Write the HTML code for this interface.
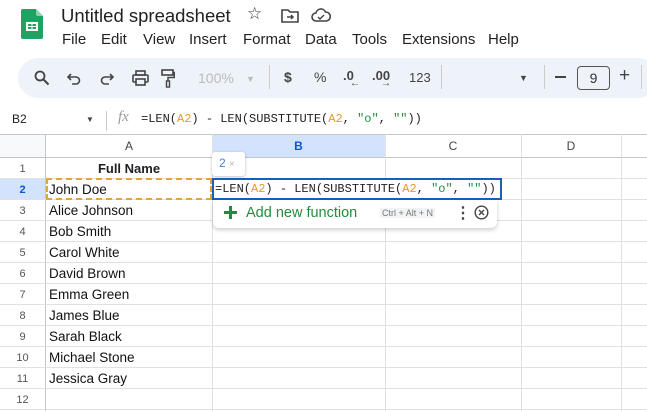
<!DOCTYPE html>
<html><head><style>
*{margin:0;padding:0;box-sizing:border-box}
body{width:647px;height:411px;overflow:hidden;background:#fff;font-family:"Liberation Sans",Arial,sans-serif;position:relative;color:#202124}
.a{position:absolute}
.m{position:absolute;top:31px;font-size:15px;color:#222;white-space:nowrap}
.tb{color:#444;font-size:14px}
.gl{background:#e1e1e1}
.rn{position:absolute;left:0;width:45px;text-align:center;font-size:11px;color:#555}
.cell{position:absolute;left:49px;font-size:13.5px;color:#111}
</style></head><body>
<svg class="a" style="left:21px;top:9px" width="22" height="30" viewBox="0 0 22 30"><path d="M2 0h13l7 7v21a2 2 0 0 1-2 2H2a2 2 0 0 1-2-2V2a2 2 0 0 1 2-2z" fill="#1ea362"/><path d="M15 0l7 7h-5a2 2 0 0 1-2-2z" fill="#8ed1b1"/><rect x="5" y="13" width="12" height="9" fill="#fff"/><rect x="7" y="15" width="3.5" height="2" fill="#1ea362"/><rect x="11.5" y="15" width="3.5" height="2" fill="#1ea362"/><rect x="7" y="18" width="3.5" height="2" fill="#1ea362"/><rect x="11.5" y="18" width="3.5" height="2" fill="#1ea362"/></svg>
<div class="a" style="left:61px;top:5px;font-size:18.5px;color:#222">Untitled spreadsheet</div>
<div class="a" style="left:247px;top:4px;font-size:17px;color:#333">☆</div>
<svg class="a" style="left:281px;top:8px" width="18" height="15" viewBox="0 0 18 15"><path d="M1 2h6l2 2h8v10H1z" fill="none" stroke="#444" stroke-width="1.6"/><path d="M6 9h6M10 7l2 2-2 2" fill="none" stroke="#444" stroke-width="1.5"/></svg>
<svg class="a" style="left:311px;top:8px" width="20" height="14" viewBox="0 0 20 14"><path d="M5 13a4 4 0 0 1 0-8 5 5 0 0 1 9.5-1A4.5 4.5 0 0 1 15 13z" fill="none" stroke="#444" stroke-width="1.6"/><path d="M7 9l2 2 4-4" fill="none" stroke="#444" stroke-width="1.4"/></svg>
<div class="m" style="left:62px">File</div>
<div class="m" style="left:101px">Edit</div>
<div class="m" style="left:143px">View</div>
<div class="m" style="left:189px">Insert</div>
<div class="m" style="left:243px">Format</div>
<div class="m" style="left:305px">Data</div>
<div class="m" style="left:352px">Tools</div>
<div class="m" style="left:402px">Extensions</div>
<div class="m" style="left:488px">Help</div>
<div class="a" style="left:18px;top:58px;width:640px;height:40px;background:#eef2f9;border-radius:20px"></div>
<svg class="a" style="left:34px;top:70px" width="16" height="16" viewBox="0 0 16 16"><circle cx="6" cy="6" r="4.5" fill="none" stroke="#444" stroke-width="1.8"/><path d="M9.5 9.5l5 5" stroke="#444" stroke-width="2"/></svg>
<svg class="a" style="left:67px;top:71px" width="14" height="14" viewBox="0 0 14 14"><path d="M4 3L1 6l3 3M1 6h8a3.5 3.5 0 0 1 0 7H5" fill="none" stroke="#444" stroke-width="1.6"/></svg>
<svg class="a" style="left:100px;top:71px" width="14" height="14" viewBox="0 0 14 14"><path d="M10 3l3 3-3 3M13 6H5a3.5 3.5 0 0 0 0 7h4" fill="none" stroke="#444" stroke-width="1.6"/></svg>
<svg class="a" style="left:132px;top:70px" width="17" height="16" viewBox="0 0 17 16"><rect x="4" y="1" width="9" height="4" fill="none" stroke="#444" stroke-width="1.6"/><rect x="1" y="5" width="15" height="7" rx="1" fill="none" stroke="#444" stroke-width="1.6"/><rect x="4" y="9" width="9" height="6" fill="#eef2f9" stroke="#444" stroke-width="1.6"/></svg>
<svg class="a" style="left:161px;top:69px" width="14" height="19" viewBox="0 0 14 19"><rect x="1" y="1" width="11" height="5" fill="none" stroke="#444" stroke-width="1.6"/><path d="M12 3.5h1.3v5H7v4" fill="none" stroke="#444" stroke-width="1.5"/><rect x="5.5" y="12" width="3" height="6" fill="none" stroke="#444" stroke-width="1.4"/></svg>
<div class="a tb" style="left:198px;top:70px;color:#bbb">100%</div>
<div class="a" style="top:74px;left:246px;font-size:9px;color:#bbb">▼</div>
<div class="a" style="left:269px;top:65px;width:1px;height:24px;background:#ccc"></div>
<div class="a tb" style="left:284px;top:69px;font-weight:bold">$</div>
<div class="a tb" style="left:314px;top:69px">%</div>
<div class="a tb" style="left:343px;top:68px;font-weight:bold;font-size:13px">.0</div>
<div class="a" style="left:350px;top:78px;font-size:10px;color:#444">←</div>
<div class="a tb" style="left:372px;top:68px;font-weight:bold;font-size:13px">.00</div>
<div class="a" style="left:381px;top:78px;font-size:10px;color:#444">→</div>
<div class="a tb" style="left:409px;top:70px;font-size:13px">123</div>
<div class="a" style="left:441px;top:65px;width:1px;height:24px;background:#ccc"></div>
<div class="a" style="left:519px;top:73px;font-size:9px;color:#444">▼</div>
<div class="a" style="left:544px;top:65px;width:1px;height:24px;background:#ccc"></div>
<div class="a" style="left:555px;top:76px;width:11px;height:2px;background:#444"></div>
<div class="a" style="left:577px;top:66px;width:33px;height:24px;border:1px solid #555;border-radius:4px;text-align:center;font-size:14px;line-height:22px;color:#333">9</div>
<div class="a" style="left:619px;top:65px;font-size:19px;color:#444">+</div>
<div class="a" style="left:641px;top:65px;width:1px;height:24px;background:#ccc"></div>
<div class="a" style="left:12px;top:112px;font-size:12px">B2</div>
<div class="a" style="left:86px;top:115px;font-size:8px;color:#444">▼</div>
<div class="a" style="left:106px;top:111px;width:1px;height:20px;background:#ccc"></div>
<div class="a" style="left:118px;top:109px;font-size:15px;font-style:italic;color:#999;font-family:'Liberation Serif',serif">fx</div>
<div class="a" style="left:141px;top:112px;font-family:'Liberation Mono',monospace;font-size:12px;color:#222;white-space:pre">=LEN(<span style="color:#e39a2b">A2</span>) - LEN(SUBSTITUTE(<span style="color:#e39a2b">A2</span>, <span style="color:#1e8e3e">"o"</span>, <span style="color:#1e8e3e">""</span>))</div>
<div class="a" style="left:0;top:134px;width:647px;height:1px;background:#c4c7c5"></div>
<div class="a" style="left:0;top:135px;width:45px;height:23px;background:#f8f9fa"></div>
<div class="a" style="left:212px;top:135px;width:173px;height:23px;background:#d3e3fd"></div>
<div class="a" style="left:0;top:179px;width:45px;height:21px;background:#d3e3fd"></div>
<div class="a" style="left:0;top:157px;width:647px;height:1px;background:#c4c7c5"></div>
<div class="a" style="left:45px;top:134px;width:1px;height:277px;background:#c4c7c5"></div>
<div class="a gl" style="left:212px;top:134px;width:1px;height:277px"></div>
<div class="a gl" style="left:385px;top:134px;width:1px;height:277px"></div>
<div class="a gl" style="left:521px;top:134px;width:1px;height:277px"></div>
<div class="a gl" style="left:621px;top:134px;width:1px;height:277px"></div>
<div class="a" style="left:46px;top:139px;width:166px;text-align:center;font-size:12px;color:#444">A</div>
<div class="a" style="left:212px;top:139px;width:173px;text-align:center;font-size:12px;color:#0b57d0;font-weight:bold">B</div>
<div class="a" style="left:385px;top:139px;width:136px;text-align:center;font-size:12px;color:#444">C</div>
<div class="a" style="left:521px;top:139px;width:100px;text-align:center;font-size:12px;color:#444">D</div>
<div class="a gl" style="left:0;top:178px;width:647px;height:1px"></div>
<div class="a gl" style="left:0;top:199px;width:647px;height:1px"></div>
<div class="a gl" style="left:0;top:220px;width:647px;height:1px"></div>
<div class="a gl" style="left:0;top:241px;width:647px;height:1px"></div>
<div class="a gl" style="left:0;top:262px;width:647px;height:1px"></div>
<div class="a gl" style="left:0;top:283px;width:647px;height:1px"></div>
<div class="a gl" style="left:0;top:304px;width:647px;height:1px"></div>
<div class="a gl" style="left:0;top:325px;width:647px;height:1px"></div>
<div class="a gl" style="left:0;top:346px;width:647px;height:1px"></div>
<div class="a gl" style="left:0;top:367px;width:647px;height:1px"></div>
<div class="a gl" style="left:0;top:388px;width:647px;height:1px"></div>
<div class="a gl" style="left:0;top:409px;width:647px;height:1px"></div>
<div class="rn" style="top:163px">1</div>
<div class="rn" style="top:184px;font-weight:bold;color:#0b57d0">2</div>
<div class="rn" style="top:205px">3</div>
<div class="rn" style="top:226px">4</div>
<div class="rn" style="top:247px">5</div>
<div class="rn" style="top:268px">6</div>
<div class="rn" style="top:289px">7</div>
<div class="rn" style="top:310px">8</div>
<div class="rn" style="top:331px">9</div>
<div class="rn" style="top:352px">10</div>
<div class="rn" style="top:373px">11</div>
<div class="rn" style="top:394px">12</div>
<div class="a" style="left:46px;top:161px;width:166px;text-align:center;font-size:13px;font-weight:bold">Full Name</div>
<div class="cell" style="top:182px">John Doe</div>
<div class="cell" style="top:203px">Alice Johnson</div>
<div class="cell" style="top:224px">Bob Smith</div>
<div class="cell" style="top:245px">Carol White</div>
<div class="cell" style="top:266px">David Brown</div>
<div class="cell" style="top:287px">Emma Green</div>
<div class="cell" style="top:308px">James Blue</div>
<div class="cell" style="top:329px">Sarah Black</div>
<div class="cell" style="top:350px">Michael Stone</div>
<div class="cell" style="top:371px">Jessica Gray</div>
<div class="a" style="left:46px;top:178px;width:166px;height:22px;border:2px dashed #e6a33a"></div>
<div class="a" style="left:212px;top:152px;width:33px;height:24px;background:#fff;box-shadow:0 1px 3px rgba(0,0,0,.25);border-radius:3px"></div>
<div class="a" style="left:219px;top:156px;font-size:12px;color:#4a7fd6">2 <span style="color:#bbb;font-size:10px">×</span></div>
<div class="a" style="left:212px;top:178px;width:290px;height:22px;border:2px solid #1a5fb4;background:#fff"></div>
<div class="a" style="left:215px;top:182px;font-family:'Liberation Mono',monospace;font-size:12px;color:#222;white-space:pre">=LEN(<span style="color:#e39a2b">A2</span>) - LEN(SUBSTITUTE(<span style="color:#e39a2b">A2</span>, <span style="color:#1e8e3e">"o"</span>, <span style="color:#1e8e3e">""</span>))</div>
<div class="a" style="left:213px;top:200px;width:284px;height:28px;background:#fff;box-shadow:0 2px 4px rgba(0,0,0,.2);border-radius:0 0 6px 6px"></div>
<div class="a" style="left:224px;top:211px;width:13px;height:2.5px;background:#1e8e3e"></div>
<div class="a" style="left:229.3px;top:205.5px;width:2.5px;height:13px;background:#1e8e3e"></div>
<div class="a" style="left:246px;top:205px;font-size:14.5px;color:#1e8e3e">Add new function</div>
<div class="a" style="left:380px;top:208px;font-size:9px;color:#777;background:#f1f3f4;padding:0 2px">Ctrl + Alt + N</div>
<div class="a" style="left:455px;top:203px;font-size:16px;color:#444;font-weight:bold">⋮</div>
<svg class="a" style="left:474px;top:205px" width="15" height="15" viewBox="0 0 15 15"><circle cx="7.5" cy="7.5" r="6.3" fill="none" stroke="#444" stroke-width="1.4"/><path d="M5 5l5 5M10 5l-5 5" stroke="#444" stroke-width="1.4"/></svg>
</body></html>
